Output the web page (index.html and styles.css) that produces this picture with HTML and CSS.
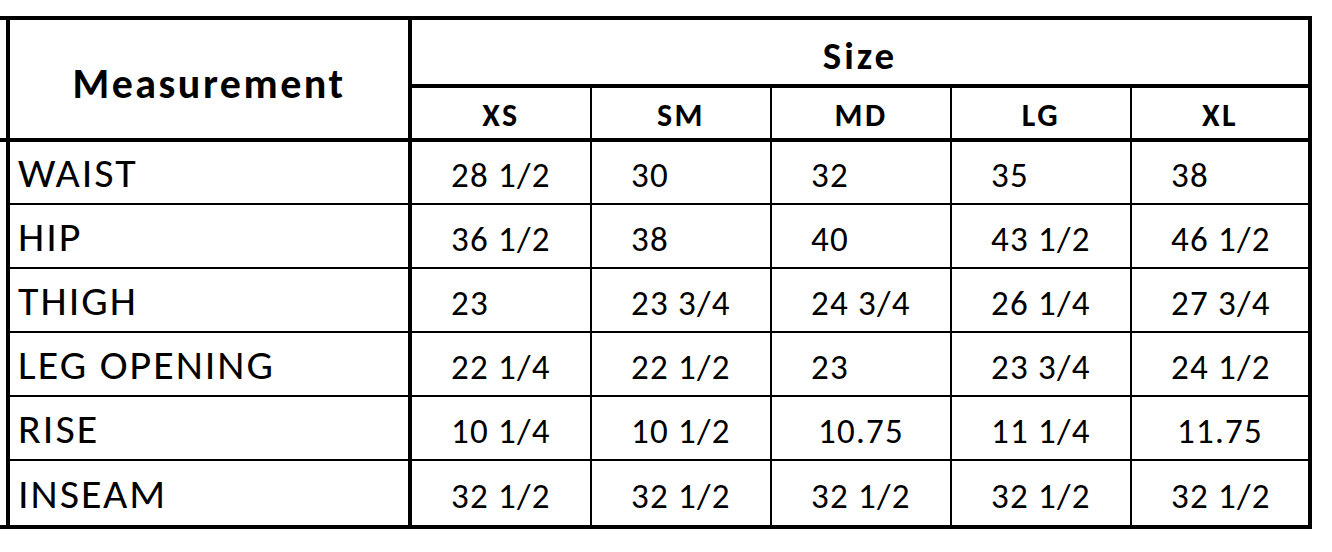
FILE: index.html
```html
<!DOCTYPE html>
<html>
<head>
<meta charset="utf-8">
<link rel="stylesheet" href="styles.css">
</head>
<body>
<div class="sheet">
  <div class="cell sliver-head"></div>
  <div class="cell meas-head"><span>Measurement</span></div>
  <div class="cell size-head"><span>Size</span></div>
  <div class="cell sz">XS</div>
  <div class="cell sz">SM</div>
  <div class="cell sz">MD</div>
  <div class="cell sz">LG</div>
  <div class="cell sz last">XL</div>

  <div class="cell sliver-body"></div>

  <div class="cell label">WAIST</div>
  <div class="cell val">28 1/2</div>
  <div class="cell val">30</div>
  <div class="cell val">32</div>
  <div class="cell val">35</div>
  <div class="cell val last">38</div>

  <div class="cell label">HIP</div>
  <div class="cell val">36 1/2</div>
  <div class="cell val">38</div>
  <div class="cell val">40</div>
  <div class="cell val">43 1/2</div>
  <div class="cell val last">46 1/2</div>

  <div class="cell label">THIGH</div>
  <div class="cell val">23</div>
  <div class="cell val">23 3/4</div>
  <div class="cell val">24 3/4</div>
  <div class="cell val">26 1/4</div>
  <div class="cell val last">27 3/4</div>

  <div class="cell label">LEG OPENING</div>
  <div class="cell val">22 1/4</div>
  <div class="cell val">22 1/2</div>
  <div class="cell val">23</div>
  <div class="cell val">23 3/4</div>
  <div class="cell val last">24 1/2</div>

  <div class="cell label">RISE</div>
  <div class="cell val">10 1/4</div>
  <div class="cell val">10 1/2</div>
  <div class="cell val center">10.75</div>
  <div class="cell val">11 1/4</div>
  <div class="cell val center last">11.75</div>

  <div class="cell label final">INSEAM</div>
  <div class="cell val final">32 1/2</div>
  <div class="cell val final">32 1/2</div>
  <div class="cell val final">32 1/2</div>
  <div class="cell val final">32 1/2</div>
  <div class="cell val final last">32 1/2</div>
</div>
</body>
</html>
```

FILE: styles.css
```css
html, body {
  margin: 0;
  padding: 0;
  background: #ffffff;
}

body {
  padding-top: 16px;
  font-family: Carlito, Calibri, Lato, "Liberation Sans", sans-serif;
  color: #000000;
}

.sheet {
  display: grid;
  width: 1312px;
  grid-template-columns: 6px 406px repeat(5, 180px);
  grid-template-rows: 68px 54px 63px 64px 64px 64px 64px 68px;
  border-top: 4px solid #000;
}

.cell {
  box-sizing: border-box;
  display: flex;
  align-items: center;
  white-space: nowrap;
}

.sliver-head {
  grid-column: 1;
  grid-row: 1 / span 2;
  border-bottom: 4px solid #000;
}

.sliver-body {
  grid-column: 1;
  grid-row: 3 / span 6;
  border-bottom: 4px solid #000;
}

.meas-head {
  grid-column: 2;
  grid-row: 1 / span 2;
  border-left: 4px solid #000;
  border-right: 4px solid #000;
  border-bottom: 4px solid #000;
  justify-content: center;
  padding-top: 8px;
  font-weight: 700;
  font-size: 42px;
  letter-spacing: 2.5px;
}

.size-head {
  grid-column: 3 / span 5;
  grid-row: 1;
  border-right: 4px solid #000;
  border-bottom: 4px solid #000;
  justify-content: center;
  padding-top: 6px;
  font-weight: 700;
  font-size: 39px;
  letter-spacing: 3px;
}

.sz {
  grid-row: 2;
  border-right: 2px solid #000;
  border-bottom: 4px solid #000;
  justify-content: center;
  padding-top: 4px;
  font-weight: 700;
  font-size: 32px;
  letter-spacing: 2.5px;
}

.label {
  grid-column: 2;
  border-left: 4px solid #000;
  border-right: 4px solid #000;
  border-bottom: 2px solid #000;
  padding-left: 8px;
  padding-top: 0;
  font-size: 42px;
  letter-spacing: 2px;
}

.val {
  border-right: 2px solid #000;
  border-bottom: 2px solid #000;
  padding-left: 39px;
  padding-top: 5px;
  font-size: 35px;
  letter-spacing: 1.2px;
}

.val.center {
  justify-content: center;
  padding-left: 0;
}

.last {
  border-right: 4px solid #000;
}

.final {
  border-bottom: 4px solid #000;
}
```
